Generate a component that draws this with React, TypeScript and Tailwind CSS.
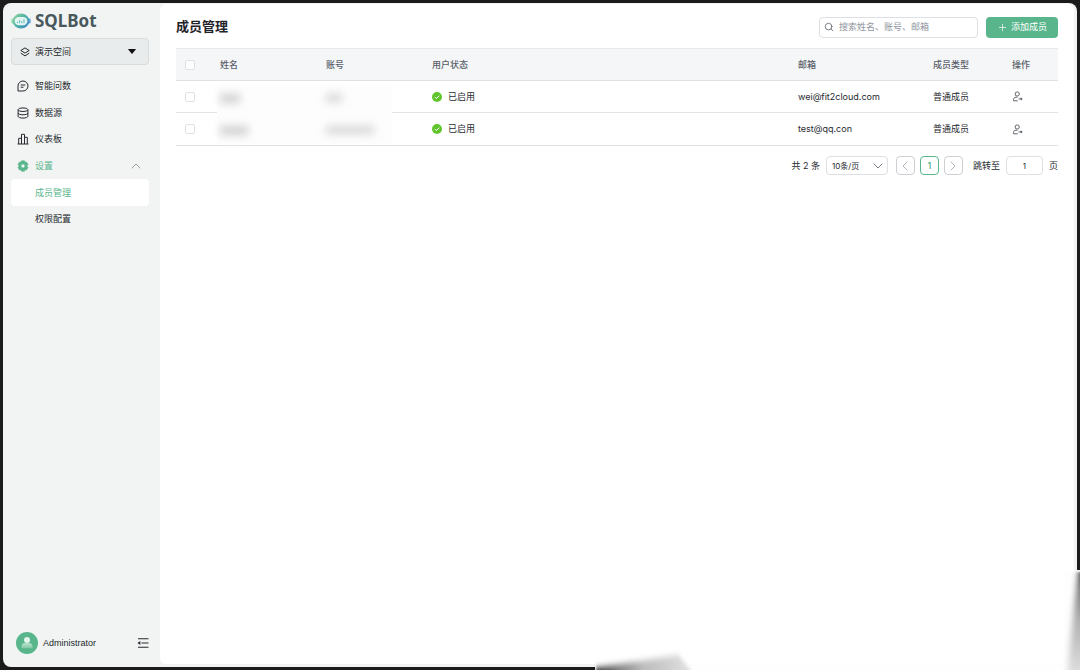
import React, { useState } from 'react';
import { Search, Plus } from 'lucide-react';

interface Member {
  id: number;
  nameWidth: string;
  accountWidth: string;
  email: string;
  role: string;
}

const members: Member[] = [
  { id: 1, nameWidth: 'w-5', accountWidth: 'w-4', email: 'wei@fit2cloud.com', role: '普通成员' },
  { id: 2, nameWidth: 'w-7', accountWidth: 'w-12', email: 'test@qq.con', role: '普通成员' },
];

const LogoIcon = () => (
  <svg className="w-5 h-4 shrink-0" viewBox="0 0 20 16" fill="none">
    <defs>
      <linearGradient id="logo" x1="2" y1="1" x2="17" y2="15" gradientUnits="userSpaceOnUse">
        <stop stopColor="#8fd69a" />
        <stop offset="0.5" stopColor="#4fb3a5" />
        <stop offset="1" stopColor="#3f86c8" />
      </linearGradient>
    </defs>
    <rect x="0.3" y="5.5" width="2.6" height="5" rx="1.3" fill="#9bdcb0" />
    <rect x="17.1" y="5.5" width="2.6" height="5" rx="1.3" fill="#6aa5dc" />
    <ellipse cx="10" cy="8" rx="8.3" ry="7.5" fill="url(#logo)" />
    <rect x="3.6" y="3.9" width="12.8" height="8.4" rx="4.2" fill="#e4f6f4" />
    <path d="M6.5 8.8v1.4M8.6 7.2v3M10.8 8v2.2M13 6v4.2" stroke="#5fb8b4" strokeWidth="1" />
  </svg>
);

const SpaceIcon = () => (
  <svg className="w-[10px] h-[10px] mr-[5px]" viewBox="0 0 10 10" fill="none" stroke="currentColor" strokeWidth="1" strokeLinejoin="round">
    <path d="M5 .9 9.200 3.500 5 6.100.8 3.500Z" />
    <path d="M.8 6.200 5 8.900l4.200-2.700" />
  </svg>
);

const ChatIcon = () => (
  <svg className="w-3 h-3" viewBox="0 0 12 12" fill="none" stroke="currentColor" strokeWidth="1">
    <path d="M1 11V6a5 5 0 1 1 5 5Z" strokeLinejoin="round" />
    <path d="M3.7 5h4.6M3.7 7.2h2.8" />
  </svg>
);

const DatabaseIcon = () => (
  <svg className="w-3 h-3" viewBox="0 0 12 12" fill="none" stroke="currentColor" strokeWidth="1">
    <ellipse cx="6" cy="2.7" rx="4.9" ry="1.8" />
    <path d="M1.1 2.7v6.600c0 1 2.200 1.800 4.900 1.800s4.900-.8 4.900-1.800V2.700M1.100 6c0 1 2.200 1.800 4.900 1.800s4.900-.8 4.900-1.800" />
  </svg>
);

const BoardIcon = () => (
  <svg className="w-3 h-3" viewBox="0 0 12 12" fill="none" stroke="currentColor" strokeWidth="1">
    <path d="M0.5 11h11M1.7 11V5.3h2.8M4.5 11V1.3h3V11M7.5 4.3h2.8V11" />
  </svg>
);

const GearIcon = () => (
  <svg className="w-3 h-3" viewBox="0 0 12 12" fill="currentColor" stroke="currentColor" strokeWidth="0.6" strokeLinejoin="round">
    <path
      fillRule="evenodd"
      d="M4.500.800h3l.5 1.400 1.500-.2 1.500 2.500-.9 1.100v.8l.9 1.100-1.500 2.500-1.500-.2-.5 1.400h-3L4 9.800l-1.500.2L1 7.500l.9-1.100v-.8L1 4.500 2.500 2l1.500.2ZM6 4a2 2 0 1 0 0 4 2 2 0 0 0 0-4Z"
    />
  </svg>
);

const StatusIcon = () => (
  <svg className="w-[10px] h-[10px] shrink-0" viewBox="0 0 10 10" fill="none">
    <circle cx="5" cy="5" r="5" fill="#62c52e" />
    <path d="m2.900 5.100 1.500 1.500 2.800-2.900" stroke="#fff" strokeWidth="1" />
  </svg>
);

const RemoveUserIcon = () => (
  <svg className="w-[11px] h-[11px]" viewBox="0 0 11 11" fill="none" stroke="currentColor" strokeWidth="0.9">
    <circle cx="5.200" cy="3" r="2.100" />
    <path d="M5.500 6.200H4C2.400 6.200 1.500 7.300 1.500 8.500v1.300H5.800" />
    <path d="M6.500 7.900h3" />
    <path d="M8.700 6.200 10.700 7.900 8.700 9.600Z" fill="currentColor" stroke="none" />
  </svg>
);

const FoldIcon = () => (
  <svg className="w-3 h-3" viewBox="0 0 12 12" fill="none" stroke="currentColor" strokeWidth="1.1">
    <path d="M1 1.800h10.500M4.500 6h7M1 10.200h10.500" />
    <path d="M3.300 4.100v3.800L.5 6Z" fill="currentColor" stroke="none" />
  </svg>
);

const AvatarIcon = () => (
  <svg className="w-[22px] h-[22px]" viewBox="0 0 22 22">
    <defs>
      <linearGradient id="body" x1="0" y1="10" x2="0" y2="17" gradientUnits="userSpaceOnUse">
        <stop stopColor="#c5e8d8" />
        <stop offset="1" stopColor="#79c4a0" />
      </linearGradient>
    </defs>
    <circle cx="11" cy="11" r="11" fill="#59b68c" />
    <path d="M5.500 16.300V15a4 4 0 0 1 4-4h3a4 4 0 0 1 4 4v1.300Z" fill="url(#body)" />
    <circle cx="11" cy="8" r="3" fill="#e2f4eb" />
  </svg>
);

const arrows = {
  up: 'M.7 5.300 5 1l4.300 4.300',
  down: 'M.7.700 5 5 9.300.700',
  left: 'M5.300.700 1 5l4.300 4.300',
  right: 'M.7.700 5 5 .7 9.300',
};

const Arrow = ({ dir, className = '' }: { dir: keyof typeof arrows; className?: string }) => {
  const vertical = dir === 'up' || dir === 'down';
  return (
    <svg
      className={`${vertical ? 'w-[10px] h-[6px]' : 'w-[6px] h-[10px]'} ${className}`}
      viewBox={vertical ? '0 0 10 6' : '0 0 6 10'}
      fill="none"
      stroke="currentColor"
      strokeWidth="0.9"
    >
      <path d={arrows[dir]} />
    </svg>
  );
};

// Soft shadows that fade the window frame out in the lower right corner
const CornerFade = () => (
  <svg className="absolute bottom-0 right-0 w-[486px] h-[100px] pointer-events-none" viewBox="0 0 486 100">
    <defs>
      <linearGradient id="side" x1="0" y1="0" x2="0" y2="100" gradientUnits="userSpaceOnUse">
        <stop stopColor="#1b1b1b" />
        <stop offset="0.200" stopColor="#777" />
        <stop offset="0.500" stopColor="#b0b0b0" />
        <stop offset="1" stopColor="#dcdcdc" />
      </linearGradient>
      <linearGradient id="foot" x1="0" y1="0" x2="98" y2="0" gradientUnits="userSpaceOnUse">
        <stop stopColor="#1b1b1b" />
        <stop offset="0.250" stopColor="#808080" />
        <stop offset="0.500" stopColor="#bcbcbc" />
        <stop offset="1" stopColor="#e2e2e2" />
      </linearGradient>
      <filter id="soft" x="-50%" y="-20%" width="200%" height="140%">
        <feGaussianBlur stdDeviation="3 1" />
      </filter>
      <filter id="softFoot" x="-20%" y="-60%" width="140%" height="220%">
        <feGaussianBlur stdDeviation="1 3" />
      </filter>
    </defs>
    <path d="M1 94H470V0H486V100H1Z" fill="#fefefe" />
    <path d="M485 2H500V110H473Q478 50 485 2Z" fill="url(#side)" filter="url(#soft)" />
    <path d="M2 98Q40 92 84 85L98 102V108H2Z" fill="url(#foot)" filter="url(#softFoot)" />
  </svg>
);

const navItem = 'flex items-center h-[26px] w-full px-[6px] gap-[6px] rounded text-left';
const checkbox = 'block w-[10px] h-[10px] appearance-none rounded-xs border border-[#dfe2e5] bg-white checked:bg-[#59b68c]';
const pageButton = 'flex items-center justify-center w-[19px] h-[19px] rounded-sm border bg-white';

const App: React.FC = () => {
  const [keyword, setKeyword] = useState('');
  const [page, setPage] = useState('1');
  const [selected, setSelected] = useState<number[]>([]);

  const toggle = (id: number) =>
    setSelected((prev) => (prev.includes(id) ? prev.filter((item) => item !== id) : [...prev, id]));

  const toggleAll = () => setSelected(selected.length === members.length ? [] : members.map((m) => m.id));

  return (
    <div className="relative min-h-screen flex bg-[#1b1b1b] p-[3px] text-[9px] leading-3 text-[#26292e] font-[Inter,'Noto_Sans_CJK_SC',sans-serif]">
      <div className="flex flex-1 rounded-lg bg-[#f1f4f3]">
        <aside className="flex flex-col w-[157px] shrink-0 pl-2 pr-[11px]">
          <div className="flex items-center gap-1 h-[35px]">
            <LogoIcon />
            <span className="text-[17px] leading-5 font-bold text-[#48585c] font-['Noto_Sans',sans-serif]">SQLBot</span>
          </div>

          <button className="flex items-center h-[27px] w-full px-2 rounded border border-[#d9dcdb] bg-[#e9ecec]">
            <SpaceIcon />
            <span>演示空间</span>
            <svg className="w-2 h-[5px] ml-auto mr-1" viewBox="0 0 8 5">
              <path d="M.5 0h7q.5 0 .2.500L4.500 4.500q-.5.5-1 0L.3.500Q0 0 .5 0Z" fill="#111" />
            </svg>
          </button>

          <nav className="mt-2">
            <button className={navItem}><ChatIcon /><span>智能问数</span></button>
            <button className={`${navItem} mt-px`}><DatabaseIcon /><span>数据源</span></button>
            <button className={navItem}><BoardIcon /><span>仪表板</span></button>
            <button className={`${navItem} mt-px text-[#59b68c]`}>
              <GearIcon />
              <span>设置</span>
              <Arrow dir="up" className="ml-auto mr-[2px] text-[#8f959e]" />
            </button>
            <a href="#members" className="flex items-center h-[27px] pl-6 rounded bg-white text-[#59b68c]">成员管理</a>
            <a href="#permissions" className="flex items-center h-[26px] pl-6 rounded">权限配置</a>
          </nav>

          <div className="flex items-center mt-auto mb-[13px] pl-[5px]">
            <AvatarIcon />
            <span className="ml-[5px] font-['Liberation_Sans',Arial,sans-serif]">Administrator</span>
            <button className="ml-auto" aria-label="收起菜单"><FoldIcon /></button>
          </div>
        </aside>

        <main className="flex-1 min-w-0 my-px mr-[3px] mb-[3px] rounded-md bg-white pl-4 pr-4">
          <header className="flex items-center pt-3">
            <h1 className="text-[13px] leading-5 pb-[2px] font-bold text-[#1f2329]">成员管理</h1>
            <label className="flex items-center gap-[5px] w-[159px] h-[21px] ml-auto px-1 rounded-sm border border-[#dcdfe3] focus-within:border-[#59b68c]">
              <Search className="w-[10px] h-[10px] shrink-0 text-[#646a73]" />
              <input
                type="text"
                aria-label="搜索成员"
                placeholder="搜索姓名、账号、邮箱"
                value={keyword}
                onChange={(e) => setKeyword(e.target.value)}
                className="w-full min-w-0 outline-none placeholder:text-[#8f959e]"
              />
            </label>
            <button className="flex items-center justify-center gap-[3px] w-[72px] h-[21px] ml-2 rounded-sm bg-[#59b68c] text-white">
              <Plus className="w-[11px] h-[11px]" strokeWidth={1.5} />
              <span>添加成员</span>
            </button>
          </header>

          <div className="relative mt-[10px]">
            <table className="w-full table-fixed border-separate border-spacing-0 text-left [&_td]:px-[7px] [&_th]:px-[7px] [&_td]:border-b [&_td]:border-[#e1e4e6]">
              <colgroup>
                <col className="w-[37px]" />
                <col className="w-[106px]" />
                <col className="w-[106px]" />
                <col />
                <col className="w-[135px]" />
                <col className="w-[79px]" />
                <col className="w-[53px]" />
              </colgroup>
              <thead className="bg-[#f5f6f8] text-[#595f68] [&_th]:font-medium [&_th]:h-[33px] [&_th]:border-t [&_th]:border-t-[#e8eaec] [&_th]:border-b [&_th]:border-b-[#dfe2e5]">
                <tr>
                  <th>
                    <input
                      type="checkbox"
                      aria-label="全选"
                      checked={selected.length === members.length}
                      onChange={toggleAll}
                      className={`${checkbox} ml-[2px]`}
                    />
                  </th>
                  <th>姓名</th>
                  <th>账号</th>
                  <th>用户状态</th>
                  <th>邮箱</th>
                  <th>成员类型</th>
                  <th>操作</th>
                </tr>
              </thead>
              <tbody>
                {members.map((member) => (
                  <tr key={member.id} className="h-8 last:h-[33px]">
                    <td>
                      <input
                        type="checkbox"
                        aria-label={member.email}
                        checked={selected.includes(member.id)}
                        onChange={() => toggle(member.id)}
                        className={`${checkbox} ml-[2px]`}
                      />
                    </td>
                    <td />
                    <td />
                    <td>
                      <span className="flex items-center gap-[6px]"><StatusIcon />已启用</span>
                    </td>
                    <td>{member.email}</td>
                    <td>{member.role}</td>
                    <td>
                      <button className="block text-[#51565d]" aria-label="移除成员"><RemoveUserIcon /></button>
                    </td>
                  </tr>
                ))}
              </tbody>
            </table>

            <div className="absolute left-[41px] top-9 w-[175px] bg-[#fdfdfd]">
              {members.map((member) => (
                <div key={member.id} className="flex items-center h-7 mb-1 last:mb-0 pl-[3px]">
                  <div className="w-[106px]">
                    <div className={`${member.nameWidth} h-[9px] bg-[#cfcfcf] blur-[4px]`} />
                  </div>
                  <div className={`${member.accountWidth} h-2 bg-[#d6d6d6] blur-[4px]`} />
                </div>
              ))}
            </div>
          </div>

          <div className="flex items-center justify-end mt-[10px]">
            <span>共 2 条</span>
            <div className="relative ml-[6px]">
              <select aria-label="每页条数" className="block w-[62px] h-[19px] pl-[5px] appearance-none rounded-sm border border-[#dcdfe3] bg-white text-[8px]">
                <option>10条/页</option>
              </select>
              <Arrow dir="down" className="absolute right-[5px] top-[7px] text-[#646a73] pointer-events-none" />
            </div>
            <button className={`${pageButton} ml-2 border-[#ccd0d4] text-[#a8abb2]`} aria-label="上一页">
              <Arrow dir="left" />
            </button>
            <button className={`${pageButton} ml-[5px] border-[#59b68c] text-[#59b68c] font-semibold`}>1</button>
            <button className={`${pageButton} ml-[5px] border-[#ccd0d4] text-[#a8abb2]`} aria-label="下一页">
              <Arrow dir="right" />
            </button>
            <label htmlFor="jump" className="ml-[10px]">跳转至</label>
            <input
              id="jump"
              type="text"
              value={page}
              onChange={(e) => setPage(e.target.value)}
              className="w-[37px] h-[19px] mx-[6px] rounded-sm border border-[#dcdfe3] text-center text-[8px] outline-none"
            />
            <span>页</span>
          </div>
        </main>
      </div>
      <CornerFade />
    </div>
  );
};

export default App;
